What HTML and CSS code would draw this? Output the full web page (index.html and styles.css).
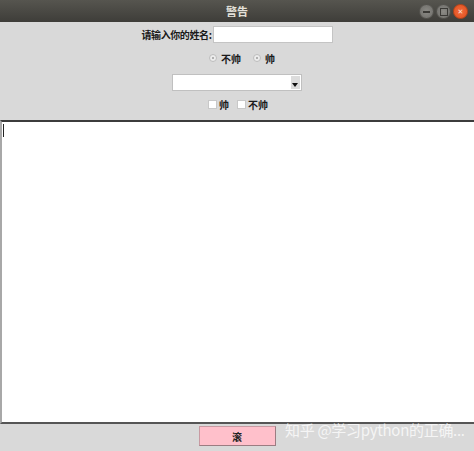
FILE: index.html
```html
<!DOCTYPE html>
<html lang="zh">
<head>
<meta charset="utf-8">
<title>警告</title>
<link rel="stylesheet" href="styles.css">
</head>
<body>
<div class="window">
  <div class="titlebar">
    <span class="title">警告</span>
    <div class="controls">
      <span class="ctl ctl-min"><span class="dash"></span></span>
      <span class="ctl ctl-max"><span class="sq"></span></span>
      <span class="ctl ctl-close">&#x2715;</span>
    </div>
  </div>
  <div class="form">
    <div class="row row-name">
      <span class="label">请输入你的姓名:</span>
      <span class="entry"></span>
    </div>
    <div class="row row-radio">
      <span class="radio"></span><span class="opt">不帅</span>
      <span class="radio radio2"></span><span class="opt">帅</span>
    </div>
    <div class="row row-combo">
      <span class="combo"><span class="arrow"></span></span>
    </div>
    <div class="row row-check">
      <span class="check"></span><span class="opt">帅</span>
      <span class="check check2"></span><span class="opt">不帅</span>
    </div>
  </div>
  <div class="text"><span class="cursor"></span></div>
  <div class="bottom">
    <span class="btn">滚</span>
    <span class="watermark">知乎 @学习python的正确...</span>
  </div>
</div>
</body>
</html>
```
FILE: styles.css
```css
html, body {
  margin: 0;
  padding: 0;
  width: 474px;
  height: 451px;
  overflow: hidden;
  background: #d9d9d9;
  font-family: "Noto Sans CJK SC", "DejaVu Sans", sans-serif;
  -webkit-font-smoothing: antialiased;
}
.window {
  display: flex;
  flex-direction: column;
  height: 451px;
}
.titlebar {
  position: relative;
  height: 22px;
  flex: none;
  background: linear-gradient(#56554f, #3e3d39);
  display: flex;
  align-items: center;
  justify-content: center;
}
.title {
  color: #e4e1da;
  font-size: 11px;
  font-weight: bold;
  line-height: 22px;
}
.controls {
  position: absolute;
  right: 6px;
  top: 4px;
  display: flex;
  gap: 2px;
}
.ctl {
  width: 15px;
  height: 15px;
  border-radius: 50%;
  display: flex;
  align-items: center;
  justify-content: center;
  box-sizing: border-box;
}
.ctl-min, .ctl-max {
  background: radial-gradient(#8c8b86, #6d6c68);
  border: 1px solid #55544f;
}
.dash {
  width: 7px;
  height: 2px;
  background: #3b3a36;
}
.sq {
  width: 6px;
  height: 6px;
  border: 1px solid #3b3a36;
}
.ctl-close {
  background: radial-gradient(#f26a3e, #e2511d);
  border: 1px solid #b8441a;
  color: #fbe4da;
  font-size: 7px;
  font-weight: bold;
  line-height: 1;
}
.form {
  height: 98px;
  flex: none;
  display: flex;
  flex-direction: column;
  align-items: center;
  padding-top: 4px;
  box-sizing: border-box;
  font-size: 10px;
  font-weight: bold;
  color: #1a1a1a;
}
.opt {
  color: #1a1a1a;
}
.row {
  display: flex;
  align-items: center;
}
.row-name {
  height: 17px;
  margin-left: 0;
}
.label {
  margin-right: 1px;
  letter-spacing: -0.4px;
}
.entry {
  width: 120px;
  height: 17px;
  background: #fff;
  box-sizing: border-box;
  border: 1px solid #c4c4c4;
}
.row-radio {
  margin-top: 7px;
  height: 16px;
  margin-left: 10px;
}
.radio {
  width: 8px;
  height: 8px;
  border-radius: 50%;
  border: 1px solid #bdbdbd;
  background: #ececec;
  margin-right: 4px;
  box-sizing: border-box;
  position: relative;
}
.radio::after {
  content: "";
  position: absolute;
  left: 2px;
  top: 2px;
  width: 2px;
  height: 2px;
  border-radius: 50%;
  background: #9c9c9c;
}
.radio2 {
  margin-left: 12px;
}
.row-combo {
  margin-top: 8px;
  height: 17px;
}
.combo {
  width: 130px;
  height: 17px;
  box-sizing: border-box;
  background: #fff;
  border: 1px solid #c0c0c0;
  position: relative;
}
.arrow {
  position: absolute;
  right: 1px;
  top: 1px;
  width: 9px;
  height: 13px;
  background: #dcdcdc;
}
.arrow::after {
  content: "";
  position: absolute;
  left: 1px;
  top: 7px;
  border-left: 3.5px solid transparent;
  border-right: 3.5px solid transparent;
  border-top: 4px solid #111;
}
.row-check {
  margin-top: 5px;
  height: 16px;
  margin-left: 2px;
}
.check {
  width: 9px;
  height: 9px;
  background: #fff;
  border: 1px solid #c8c8c8;
  box-sizing: border-box;
  margin-right: 2px;
}
.check2 {
  margin-left: 8px;
}
.text {
  flex: none;
  height: 300px;
  background: #fff;
  border-top: 2px solid #3c3c3c;
  border-left: 2px solid #a8a8a8;
  border-bottom: 2px solid #555;
  position: relative;
}
.cursor {
  position: absolute;
  left: 1px;
  top: 2px;
  width: 1px;
  height: 13px;
  background: #222;
}
.bottom {
  flex: 1;
  position: relative;
  display: flex;
  justify-content: center;
  padding-top: 2px;
  box-sizing: border-box;
}
.btn {
  width: 77px;
  height: 20px;
  box-sizing: border-box;
  background: #ffc0cb;
  border: 1px solid #c89aa2;
  border-bottom-color: #9c7c82;
  border-right-color: #9c7c82;
  font-size: 10px;
  font-weight: bold;
  color: #222;
  display: flex;
  align-items: center;
  justify-content: center;
}
.watermark {
  position: absolute;
  left: 285px;
  top: -5px;
  font-size: 15px;
  color: rgba(255,255,255,0.75);
  white-space: nowrap;
  letter-spacing: -0.3px;
}
```
